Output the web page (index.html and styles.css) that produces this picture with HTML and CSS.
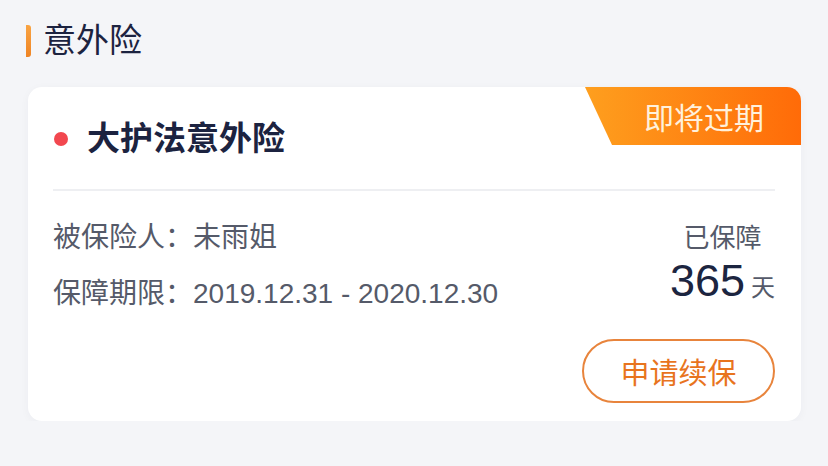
FILE: index.html
```html
<!DOCTYPE html>
<html lang="zh-CN">
<head>
  <meta charset="UTF-8">
  <meta name="viewport" content="width=device-width, initial-scale=1.0">
  <title>意外险</title>
  <link rel="stylesheet" href="styles.css">
</head>
<body>

  <!-- Section heading -->
  <h2 class="section-title"><span class="bar"></span>意外险</h2>

  <!-- Policy card -->
  <div class="card">
    <div class="badge">即将过期</div>

    <div class="card-head">
      <span class="dot"></span>
      <h3 class="policy-name">大护法意外险</h3>
    </div>

    <div class="info">
      <div class="info-left">
        <div class="row"><span class="label">被保险人：</span><span class="value">未雨姐</span></div>
        <div class="row"><span class="label">保障期限：</span><span class="value">2019.12.31 - 2020.12.30</span></div>
      </div>
      <div class="info-right">
        <div class="covered-label">已保障</div>
        <div class="covered-days"><span class="num">365</span><span class="unit">天</span></div>
      </div>
    </div>

    <div class="actions">
      <button class="renew">申请续保</button>
    </div>
  </div>

</body>
</html>
```

FILE: styles.css
```css
body { margin: 0; background: #f4f5f8; font-family: "Liberation Sans", "Noto Sans CJK SC", sans-serif; color: #1c2340; }

.section-title { display: flex; align-items: center; gap: 12px; margin: 21px 0 0 26px; font-size: 33px; font-weight: normal; line-height: 40px; color: #1c2340; }
.section-title .bar { width: 5px; height: 32px; border-radius: 0 3px 3px 0; background: linear-gradient(#f9a443, #ef8424); }

.card { position: relative; margin: 26px 27px 0 28px; padding: 0 26px 18px 25px; background: #fff; border-radius: 14px; box-shadow: 0 2px 10px rgba(30, 40, 70, 0.04); }

.badge { position: absolute; top: 0; right: 0; width: 216px; height: 58px; padding-left: 22px; box-sizing: border-box; display: flex; align-items: center; justify-content: center; font-size: 30px; color: #fff1dc; background: linear-gradient(90deg, #fe9f1e, #ff6b08); border-top-right-radius: 14px; clip-path: polygon(0 0, 100% 0, 100% 100%, 27px 100%); }

.card-head { display: flex; align-items: center; gap: 19px; padding: 32px 0 30px 1px; border-bottom: 2px solid #eeeff2; }
.dot { width: 14px; height: 14px; border-radius: 50%; background: #f2474f; }
.policy-name { margin: 0; font-size: 33px; line-height: 40px; font-weight: bold; color: #1c2340; }

.info { display: flex; justify-content: space-between; margin-top: 29px; }
.row { font-size: 28px; line-height: 36px; color: #555a69; }
.row + .row { margin-top: 20px; }

.info-right { text-align: center; }
.covered-label { font-size: 26px; line-height: 36px; color: #555a69; }
.covered-days { line-height: 50px; }
.covered-days .num { font-size: 45px; color: #1c2540; }
.covered-days .unit { margin-left: 6px; font-size: 24px; color: #555a69; }

.actions { display: flex; justify-content: flex-end; margin-top: 23px; }
.renew { width: 193px; height: 64px; border: 2px solid #e8843c; border-radius: 32px; background: #fff; font-family: inherit; font-size: 29px; color: #e8741e; cursor: pointer; }
```
